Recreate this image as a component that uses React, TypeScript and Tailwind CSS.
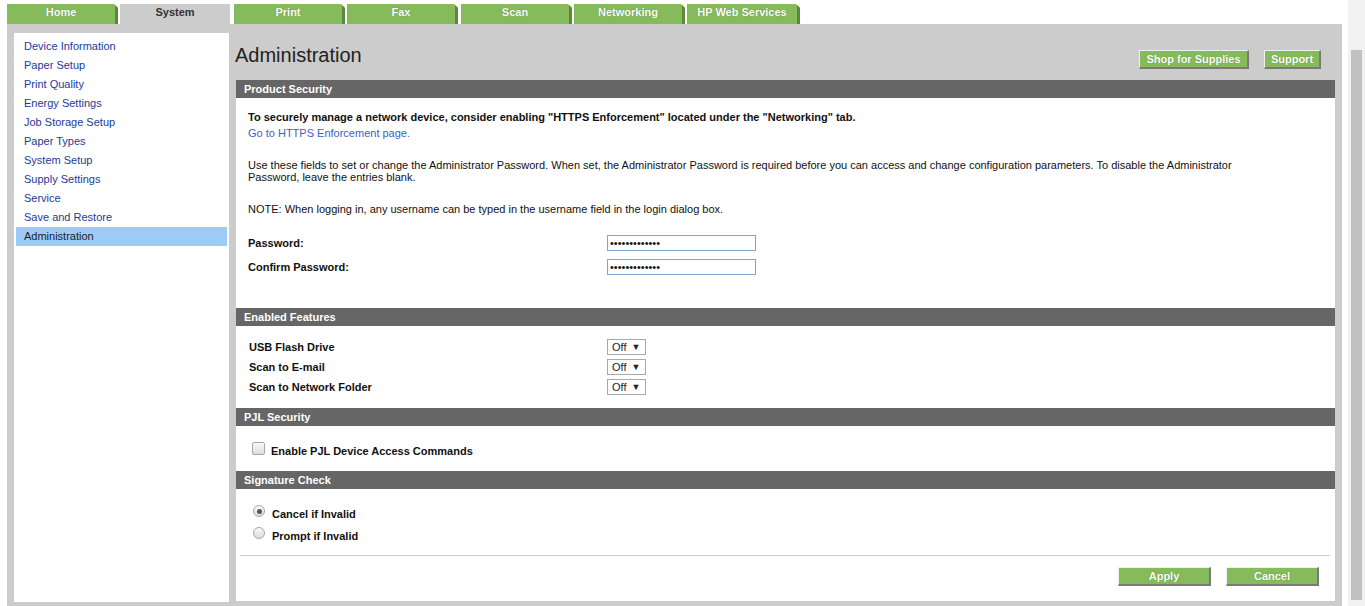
import React from "react";

const tabs = [
  { label: "Home", cls: "ml-[7px] w-[111px]" },
  { label: "System", cls: "ml-[2px] w-[110px]", active: true },
  { label: "Print", cls: "ml-[4px] w-[111px]" },
  { label: "Fax", cls: "ml-[2px] w-[111px]" },
  { label: "Scan", cls: "ml-[3px] w-[111px]" },
  { label: "Networking", cls: "ml-[2px] w-[111px]" },
  { label: "HP Web Services", cls: "ml-[2px] w-[113px]" },
];

const menu = [
  "Device Information",
  "Paper Setup",
  "Print Quality",
  "Energy Settings",
  "Job Storage Setup",
  "Paper Types",
  "System Setup",
  "Supply Settings",
  "Service",
  "Save and Restore",
  "Administration",
];

function GreenButton({ label, className }: { label: string; className: string }) {
  return (
    <button
      className={
        "h-[19px] bg-[#86bb5b] border-t border-l border-[#eeeeee] border-b-2 border-r-2 border-b-[#7a7a7a] border-r-[#7a7a7a] text-white text-[11px] font-bold leading-[16px] [text-shadow:0_0_1px_#4a7a2a] " +
        className
      }
    >
      {label}
    </button>
  );
}

function SectionHeader({ title }: { title: string }) {
  return (
    <div className="h-[18px] bg-[#666666] pl-[8px] text-white text-[11px] font-bold leading-[18px]">
      {title}
    </div>
  );
}

function OffSelect() {
  return (
    <div className="w-[39px] h-[16px] border border-[#a9a9a9] bg-white flex items-center pl-[4px] gap-[5px] text-[11px] font-normal leading-[14px] text-[#222]">
      <span>Off</span>
      <span className="text-[9px]">▼</span>
    </div>
  );
}

function Radio({ checked }: { checked?: boolean }) {
  return (
    <span className="w-[12px] h-[12px] rounded-full border border-[#a6a6a6] bg-gradient-to-b from-[#fafafa] to-[#dcdcdc] flex items-center justify-center">
      {checked && <span className="w-[5px] h-[5px] rounded-full bg-[#555555]" />}
    </span>
  );
}

export default function App() {
  return (
    <div className="h-[606px] w-[1365px] overflow-hidden bg-white flex font-['Liberation_Sans',Arial,sans-serif]">
      <div className="w-[1348px] flex flex-col pt-[4px]">
        {/* Tabs */}
        <div className="flex h-[20px] shrink-0">
          {tabs.map((t) =>
            t.active ? (
              <div
                key={t.label}
                className={"h-[20px] bg-[#cccccc] text-center text-[11px] font-bold leading-[17px] text-[#333333] " + t.cls}
              >
                {t.label}
              </div>
            ) : (
              <div
                key={t.label}
                className={
                  "h-[20px] bg-[#86bb5b] border-r-[3px] border-[#5a8a38] text-center text-[11px] font-bold leading-[17px] text-white [text-shadow:0_0_1px_#4a7a2a] [clip-path:polygon(0_0,calc(100%_-_4px)_0,100%_4px,100%_100%,0_100%)] " +
                  t.cls
                }
              >
                {t.label}
              </div>
            )
          )}
        </div>

        {/* Gray body */}
        <div className="ml-[7px] w-[1335px] flex-1 bg-[#cccccc] flex pt-[9px] px-[7px] gap-[7px]">
          {/* Sidebar */}
          <div className="w-[215px] bg-white pt-[4px] mb-[4px]">
            {menu.map((m) =>
              m === "Administration" ? (
                <div key={m} className="mx-[2px] h-[19px] bg-[#9ccbf8] pl-[8px] text-[11px] leading-[19px] text-[#222222]">
                  {m}
                </div>
              ) : (
                <div key={m} className="mx-[2px] h-[19px] pl-[8px] text-[11px] leading-[19px] text-[#1d3a96]">
                  {m}
                </div>
              )
            )}
          </div>

          {/* Main */}
          <div className="flex-1 flex flex-col">
            <div className="h-[47px] flex items-start justify-between pr-[14px]">
              <h1 className="-ml-[1px] pt-[10px] text-[20px] leading-[24px] text-[#222222]">Administration</h1>
              <div className="flex gap-[15px] mt-[17px]">
                <GreenButton label="Shop for Supplies" className="w-[110px]" />
                <GreenButton label="Support" className="w-[57px]" />
              </div>
            </div>

            <div className="bg-white">
              <SectionHeader title="Product Security" />
              <div className="h-[210px] pl-[12px] pt-[11px] text-[11px] text-[#111111]">
                <div className="font-bold leading-[16px]">
                  To securely manage a network device, consider enabling "HTTPS Enforcement" located under the "Networking" tab.
                </div>
                <div className="leading-[16px] text-[#3b5fc9]">Go to HTTPS Enforcement page.</div>
                <p className="mt-[18px] leading-[12px] max-w-[1030px]">
                  Use these fields to set or change the Administrator Password. When set, the Administrator Password is required before you can access and change configuration parameters. To disable the Administrator Password, leave the entries blank.
                </p>
                <p className="mt-[20px] leading-[12px]">
                  NOTE: When logging in, any username can be typed in the username field in the login dialog box.
                </p>
                <div className="mt-[20px] flex flex-col gap-[8px]">
                  {["Password:", "Confirm Password:"].map((l) => (
                    <div key={l} className="flex items-center h-[16px]">
                      <span className="w-[359px] font-bold">{l}</span>
                      <div className="w-[149px] h-[16px] border border-[#7ba4d4] pl-[2px] text-[11px] leading-[14px] text-[#111]">
                        •••••••••••••
                      </div>
                    </div>
                  ))}
                </div>
              </div>

              <SectionHeader title="Enabled Features" />
              <div className="h-[82px] pl-[13px] pt-[11px] text-[11px] font-bold text-[#111111]">
                {["USB Flash Drive", "Scan to E-mail", "Scan to Network Folder"].map((l) => (
                  <div key={l} className="h-[20px] flex items-center">
                    <span className="w-[358px]">{l}</span>
                    <OffSelect />
                  </div>
                ))}
              </div>

              <SectionHeader title="PJL Security" />
              <div className="h-[45px] pl-[16px] pt-[15px] text-[11px] font-bold text-[#111111]">
                <div className="h-[20px] flex items-center">
                  <span className="w-[13px] h-[13px] -mt-[6px] rounded-[2px] border border-[#a6a6a6] bg-gradient-to-b from-[#fafafa] to-[#dcdcdc]" />
                  <span className="ml-[6px]">Enable PJL Device Access Commands</span>
                </div>
              </div>

              <SectionHeader title="Signature Check" />
              <div className="h-[112px] pt-[14px] text-[11px] font-bold text-[#111111]">
                {[
                  { l: "Cancel if Invalid", c: true },
                  { l: "Prompt if Invalid", c: false },
                ].map((r) => (
                  <div key={r.l} className="h-[22px] flex items-center pl-[17px]">
                    <span className="-mt-[6px]">
                      <Radio checked={r.c} />
                    </span>
                    <span className="ml-[7px]">{r.l}</span>
                  </div>
                ))}
                <div className="mt-[8px] mx-[4px] mr-[5px] h-px bg-[#cfcfcf]" />
                <div className="mt-[11px] flex justify-end gap-[15px] pr-[16px]">
                  <GreenButton label="Apply" className="w-[93px]" />
                  <GreenButton label="Cancel" className="w-[93px]" />
                </div>
              </div>
            </div>
          </div>
        </div>
      </div>

      {/* Scrollbar */}
      <div className="w-[17px] bg-[#f1f1f1] pt-[50px] px-[3px] pb-[6px] flex">
        <div className="flex-1 bg-[#c1c1c1]" />
      </div>
    </div>
  );
}
